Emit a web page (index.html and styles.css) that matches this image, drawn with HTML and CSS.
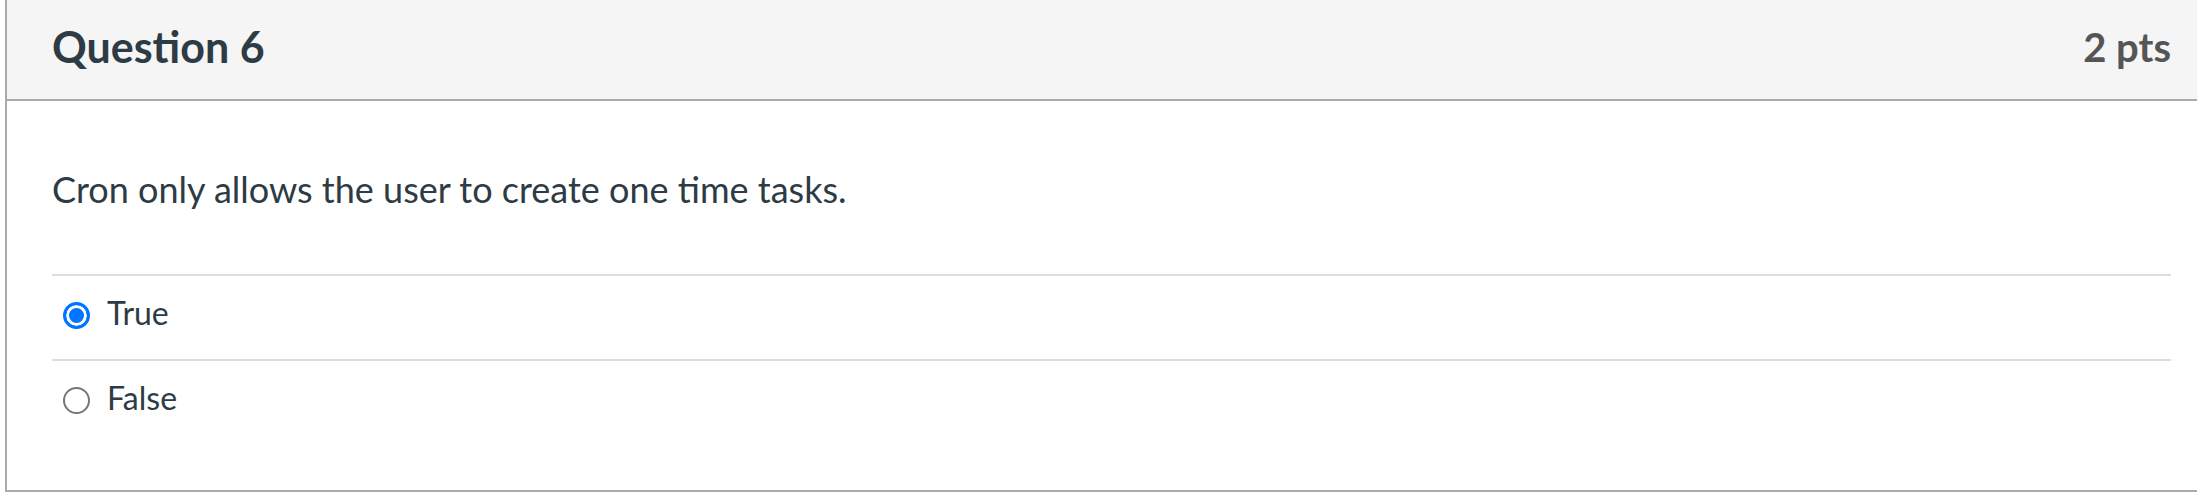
FILE: index.html
```html
<!DOCTYPE html>
<html lang="en">
<head>
<meta charset="utf-8">
<title>Question 6</title>
<link rel="stylesheet" href="styles.css">
</head>
<body>
<div class="question">
  <div class="header">
    <h2 class="name">Question 6</h2>
    <span class="points">2 pts</span>
  </div>
  <div class="content">
    <p class="text">Cron only allows the user to create one time tasks.</p>
    <div class="answers">
      <label class="answer">
        <span class="radio checked"></span>
        <span class="label">True</span>
      </label>
      <label class="answer">
        <span class="radio"></span>
        <span class="label">False</span>
      </label>
    </div>
  </div>
</div>
</body>
</html>
```
FILE: styles.css
```css
html, body {
  margin: 0;
  padding: 0;
  background: #ffffff;
  overflow: hidden;
}

body {
  font-family: Lato, "Noto Sans", sans-serif;
  color: #2d3b45;
}

.question {
  margin-left: 5px;
  margin-top: -2px;
  width: 2209px;
  border: 2px solid #aaaaaa;
}

.header {
  display: flex;
  justify-content: space-between;
  align-items: center;
  height: 101px;
  padding: 0 45px 6px;
  background: #f5f5f5;
  border-bottom: 2px solid #aaaaaa;
  box-sizing: border-box;
}

.name {
  margin: 0;
  font-size: 43px;
  font-weight: 700;
  color: #2d3b45;
  line-height: 1;
}

.points {
  font-size: 40px;
  font-weight: 700;
  color: #555555;
  line-height: 1;
}

.content {
  padding: 0 45px 46px;
}

.text {
  margin: 0;
  padding-top: 67px;
  padding-bottom: 63px;
  font-size: 36px;
  line-height: 43px;
}

.answers {
  border-top: 2px solid #dddddd;
}

.answer {
  display: flex;
  align-items: center;
  height: 83px;
  padding-left: 11px;
  border-bottom: 2px solid #dddddd;
}

.answer:last-child {
  border-bottom: none;
}

.radio {
  flex: none;
  width: 27px;
  height: 27px;
  border-radius: 50%;
  box-sizing: border-box;
  border: 2.5px solid #767676;
  background: #ffffff;
  margin-right: 17px;
  margin-bottom: 4px;
}

.radio.checked {
  border: 3px solid #0075ff;
  background: #0075ff;
  box-shadow: inset 0 0 0 3px #ffffff;
}

.label {
  font-size: 32px;
  line-height: 40px;
  margin-bottom: 10px;
}
```
